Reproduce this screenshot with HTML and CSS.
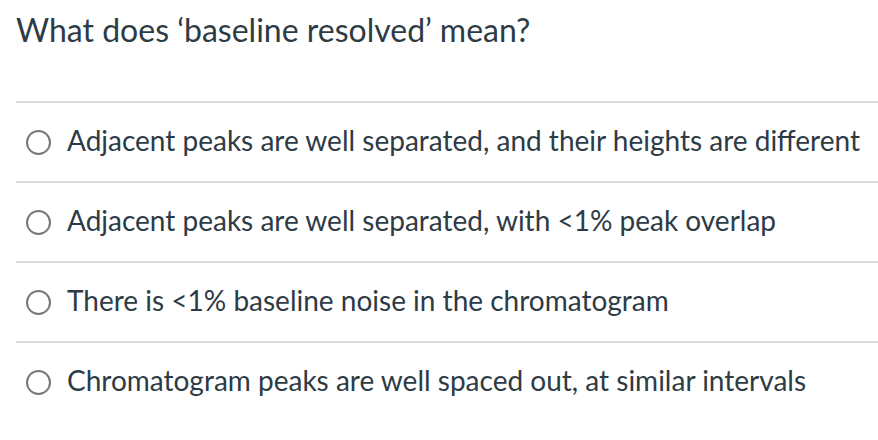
FILE: index.html
```html
<!DOCTYPE html>
<html lang="en">
<head>
<meta charset="utf-8">
<link rel="stylesheet" href="styles.css">
</head>
<body>
<div class="question">
  <h1 class="question-text">What does ‘baseline resolved’ mean?</h1>
  <ul class="answers">
    <li class="answer"><span class="radio"></span><span class="label">Adjacent peaks are well separated, and their heights are different</span></li>
    <li class="answer"><span class="radio"></span><span class="label">Adjacent peaks are well separated, with &lt;1% peak overlap</span></li>
    <li class="answer"><span class="radio"></span><span class="label">There is &lt;1% baseline noise in the chromatogram</span></li>
    <li class="answer"><span class="radio"></span><span class="label">Chromatogram peaks are well spaced out, at similar intervals</span></li>
  </ul>
</div>
</body>
</html>
```
FILE: styles.css
```css
html, body {
  margin: 0;
  padding: 0;
  background: #ffffff;
}
body {
  font-family: Lato, "Open Sans", sans-serif;
  color: #2d3b45;
}
.question {
  padding-left: 16px;
}
.question-text {
  margin: 10px 0 0 0;
  font-size: 32px;
  line-height: 40px;
  font-weight: 400;
}
.answers {
  list-style: none;
  margin: 51px 0 0 0;
  padding: 0;
}
.answer {
  display: flex;
  align-items: center;
  height: 78px;
  border-top: 2px solid #dddddd;
}
.radio {
  flex: none;
  box-sizing: border-box;
  width: 25px;
  height: 25px;
  border: 2px solid #777777;
  border-radius: 50%;
  margin-left: 10px;
  margin-right: 16px;
}
.label {
  font-size: 28px;
  line-height: 34px;
  margin-bottom: 4px;
}
```
